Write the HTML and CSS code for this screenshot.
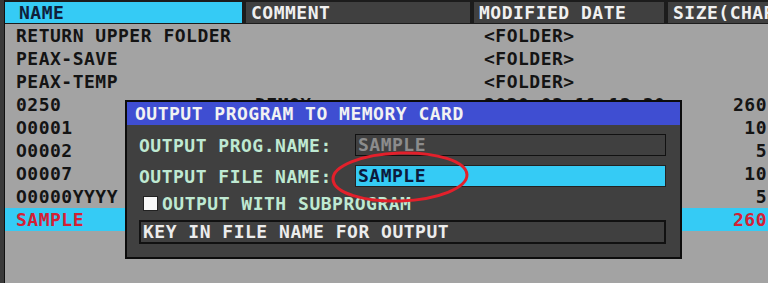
FILE: index.html
```html
<!DOCTYPE html>
<html>
<head>
<meta charset="utf-8">
<link rel="stylesheet" href="styles.css">
</head>
<body>
<div class="screen">
  <div class="frame-left"></div>
  <div class="main">
    <div class="header">
      <div class="hcell active">NAME</div>
      <div class="hcell">COMMENT</div>
      <div class="hcell">MODIFIED DATE</div>
      <div class="hcell">SIZE(CHAR)</div>
    </div>
    <div class="list">
      <div class="row"><span class="c-name">RETURN UPPER FOLDER</span><span class="c-com"></span><span class="c-date">&lt;FOLDER&gt;</span><span class="c-size"></span></div>
      <div class="row"><span class="c-name">PEAX-SAVE</span><span class="c-com"></span><span class="c-date">&lt;FOLDER&gt;</span><span class="c-size"></span></div>
      <div class="row"><span class="c-name">PEAX-TEMP</span><span class="c-com"></span><span class="c-date">&lt;FOLDER&gt;</span><span class="c-size"></span></div>
      <div class="row"><span class="c-name">0250</span><span class="c-com">DEMOX</span><span class="c-date">2020-03-11 12:30</span><span class="c-size">260</span></div>
      <div class="row"><span class="c-name">O0001</span><span class="c-com"></span><span class="c-date"></span><span class="c-size">10</span></div>
      <div class="row"><span class="c-name">O0002</span><span class="c-com"></span><span class="c-date"></span><span class="c-size">5</span></div>
      <div class="row"><span class="c-name">O0007</span><span class="c-com"></span><span class="c-date"></span><span class="c-size">10</span></div>
      <div class="row"><span class="c-name">O0000YYYY</span><span class="c-com"></span><span class="c-date"></span><span class="c-size">5</span></div>
      <div class="row selected"><span class="c-name">SAMPLE</span><span class="c-com"></span><span class="c-date"></span><span class="c-size">260</span></div>
    </div>
  </div>

  <div class="dialog">
    <div class="dlg-title">OUTPUT PROGRAM TO MEMORY CARD</div>
    <div class="dlg-body">
      <div class="field-row r1">
        <span class="label">OUTPUT PROG.NAME:</span>
        <span class="field disabled">SAMPLE</span>
      </div>
      <div class="field-row r2">
        <span class="label">OUTPUT FILE NAME:</span>
        <span class="field active">SAMPLE</span>
      </div>
      <div class="check-row">
        <span class="checkbox"></span>
        <span class="label">OUTPUT WITH SUBPROGRAM</span>
      </div>
      <div class="message">KEY IN FILE NAME FOR OUTPUT</div>
    </div>
  </div>

  <svg class="mark" width="768" height="283" viewBox="0 0 768 283">
    <ellipse cx="400" cy="177" rx="67" ry="24" fill="none" stroke="#e3202b" stroke-width="3" transform="rotate(-2 400 177)"/>
  </svg>
</div>
</body>
</html>
```

FILE: styles.css
```css
html, body {
  margin: 0;
  padding: 0;
  width: 768px;
  height: 283px;
  overflow: hidden;
  background: #a3a3a3;
}

.screen {
  position: relative;
  display: flex;
  width: 768px;
  height: 283px;
  font-family: "DejaVu Sans Mono", "Liberation Mono", monospace;
  font-size: 18px;
  font-weight: bold;
  letter-spacing: 0.5px;
  overflow: hidden;
}

.frame-left {
  width: 4px;
  flex: none;
  background: #3a3a3a;
  border-right: 1px solid #111;
}

.main {
  flex: 1;
  display: flex;
  flex-direction: column;
  min-width: 0;
}

.header {
  display: grid;
  grid-template-columns: 237px 224px 190px 120px;
  column-gap: 4px;
  height: 24px;
  padding-top: 2px;
  box-sizing: border-box;
  background: #1c1c1c;
  border-bottom: 1px solid #1c1c1c;
}

.hcell {
  background: #404040;
  color: #f0f0f0;
  padding-left: 5px;
  line-height: 21px;
  white-space: nowrap;
  overflow: hidden;
}

.hcell.active {
  background: #35cbf5;
  color: #10203a;
  padding-left: 14px;
}

.list {
  display: flex;
  flex-direction: column;
}

.row {
  display: grid;
  grid-template-columns: 241px 228px 194px 100px;
  height: 23px;
  line-height: 23px;
  color: #141414;
  white-space: nowrap;
}

.row.selected {
  background: #35cbf5;
  color: #d42035;
}

.c-name { padding-left: 11px; }
.c-com { padding-left: 9px; }
.c-date { padding-left: 10px; }
.c-size { text-align: right; padding-right: 1px; }

.dialog {
  position: absolute;
  left: 125px;
  top: 100px;
  width: 557px;
  height: 159px;
  box-sizing: border-box;
  border: 2px solid #0c0c0c;
  background: #404040;
  display: flex;
  flex-direction: column;
}

.dlg-title {
  height: 23px;
  line-height: 23px;
  background: #3f4ed2;
  color: #f2f2f2;
  padding-left: 8px;
  white-space: nowrap;
}

.dlg-body {
  display: flex;
  flex-direction: column;
  padding: 9px 14px 13px 12px;
}

.field-row {
  display: flex;
  align-items: center;
  height: 22px;
}

.field-row.r1 { margin-bottom: 9px; }
.field-row.r2 { margin-bottom: 6px; }

.label {
  color: #bfe9d2;
  white-space: nowrap;
}

.field-row .label {
  width: 216px;
  flex: none;
}

.field {
  flex: 1;
  height: 22px;
  box-sizing: border-box;
  line-height: 20px;
  padding-left: 2px;
  border: 1px solid #111;
}

.field.disabled {
  color: #8c8c8c;
  background: #404040;
}

.field.active {
  background: #35cbf5;
  color: #0c1a3c;
  border-color: #222;
}

.check-row {
  display: flex;
  align-items: center;
  height: 20px;
  margin-bottom: 7px;
  padding-left: 4px;
  gap: 4px;
}

.checkbox {
  width: 13px;
  height: 13px;
  background: #f8f8f8;
  border: 1px solid #222;
  flex: none;
}

.message {
  height: 24px;
  box-sizing: border-box;
  border: 2px solid #111;
  line-height: 20px;
  padding-left: 2px;
  color: #ececec;
  white-space: nowrap;
}

.mark {
  position: absolute;
  left: 0;
  top: 0;
  pointer-events: none;
}
```
